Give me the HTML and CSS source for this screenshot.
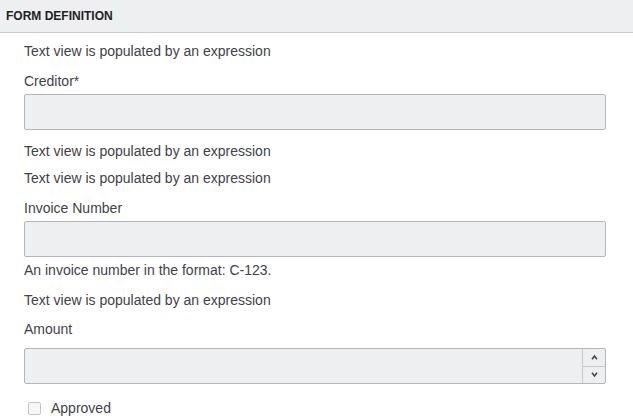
FILE: index.html
```html
<!DOCTYPE html>
<html>
<head>
<meta charset="utf-8">
<link rel="stylesheet" href="styles.css">
</head>
<body>
<div class="header">FORM DEFINITION</div>
<div class="form">
  <div class="textview tv-first">Text view is populated by an expression</div>
  <label class="label">Creditor*</label>
  <div class="input"></div>
  <div class="textview tv-after-input">Text view is populated by an expression</div>
  <div class="textview">Text view is populated by an expression</div>
  <label class="label">Invoice Number</label>
  <div class="input"></div>
  <div class="help">An invoice number in the format: C-123.</div>
  <div class="textview tv-after-help">Text view is populated by an expression</div>
  <label class="label label-amount">Amount</label>
  <div class="input number">
    <div class="number-field"></div>
    <div class="spinner">
      <div class="spin">
        <svg width="7" height="5" viewBox="0 0 7 5"><polyline points="1,4.2 3.5,1 6,4.2" fill="none" stroke="#3f434a" stroke-width="1.5"/></svg>
      </div>
      <div class="spin spin-down">
        <svg width="7" height="5" viewBox="0 0 7 5"><polyline points="1,0.8 3.5,4 6,0.8" fill="none" stroke="#3f434a" stroke-width="1.5"/></svg>
      </div>
    </div>
  </div>
  <div class="check">
    <span class="box"></span>
    <span class="check-label">Approved</span>
  </div>
</div>
</body>
</html>
```

FILE: styles.css
```css
html, body {
  margin: 0;
  padding: 0;
  background: #ffffff;
}
body {
  font-family: "Liberation Sans", Arial, sans-serif;
  color: #3f4248;
  font-size: 14px;
  width: 633px;
  height: 419px;
  overflow: hidden;
}
.header {
  height: 33px;
  box-sizing: border-box;
  background: #eeeff1;
  border-bottom: 1px solid #c9cacd;
  font-size: 12px;
  font-weight: bold;
  color: #1d1f23;
  padding-left: 6px;
  line-height: 32px;
}
.form {
  padding: 0 27px 0 24px;
}
.textview, .help, .label {
  line-height: 20px;
  height: 20px;
}
.tv-first { margin-top: 8px; }
.label {
  display: block;
  margin-top: 10px;
}
.input {
  margin-top: 3px;
  height: 36px;
  box-sizing: border-box;
  background: #eeeff1;
  border: 1px solid #b3b6bc;
  border-radius: 2px;
}
.tv-after-input { margin-top: 11px; }
.textview + .textview { margin-top: 7px; }
.help { margin-top: 3px; }
.tv-after-help { margin-top: 10px; }
.label-amount { margin-top: 9px; }
.number {
  margin-top: 9px;
  display: flex;
}
.number-field { flex: 1; }
.spinner {
  width: 22px;
  border-left: 1px solid #c6c8cd;
  display: flex;
  flex-direction: column;
}
.spin {
  flex: 1;
  display: flex;
  align-items: center;
  justify-content: center;
}
.spin-down { border-top: 1px solid #c6c8cd; }
.check {
  display: flex;
  align-items: center;
  margin-top: 14px;
  padding-left: 4px;
}
.box {
  width: 11px;
  height: 11px;
  border: 1px solid #c3c5c9;
  border-radius: 2px;
  background: #f7f7f8;
}
.check-label {
  margin-left: 10px;
  line-height: 20px;
}
```
